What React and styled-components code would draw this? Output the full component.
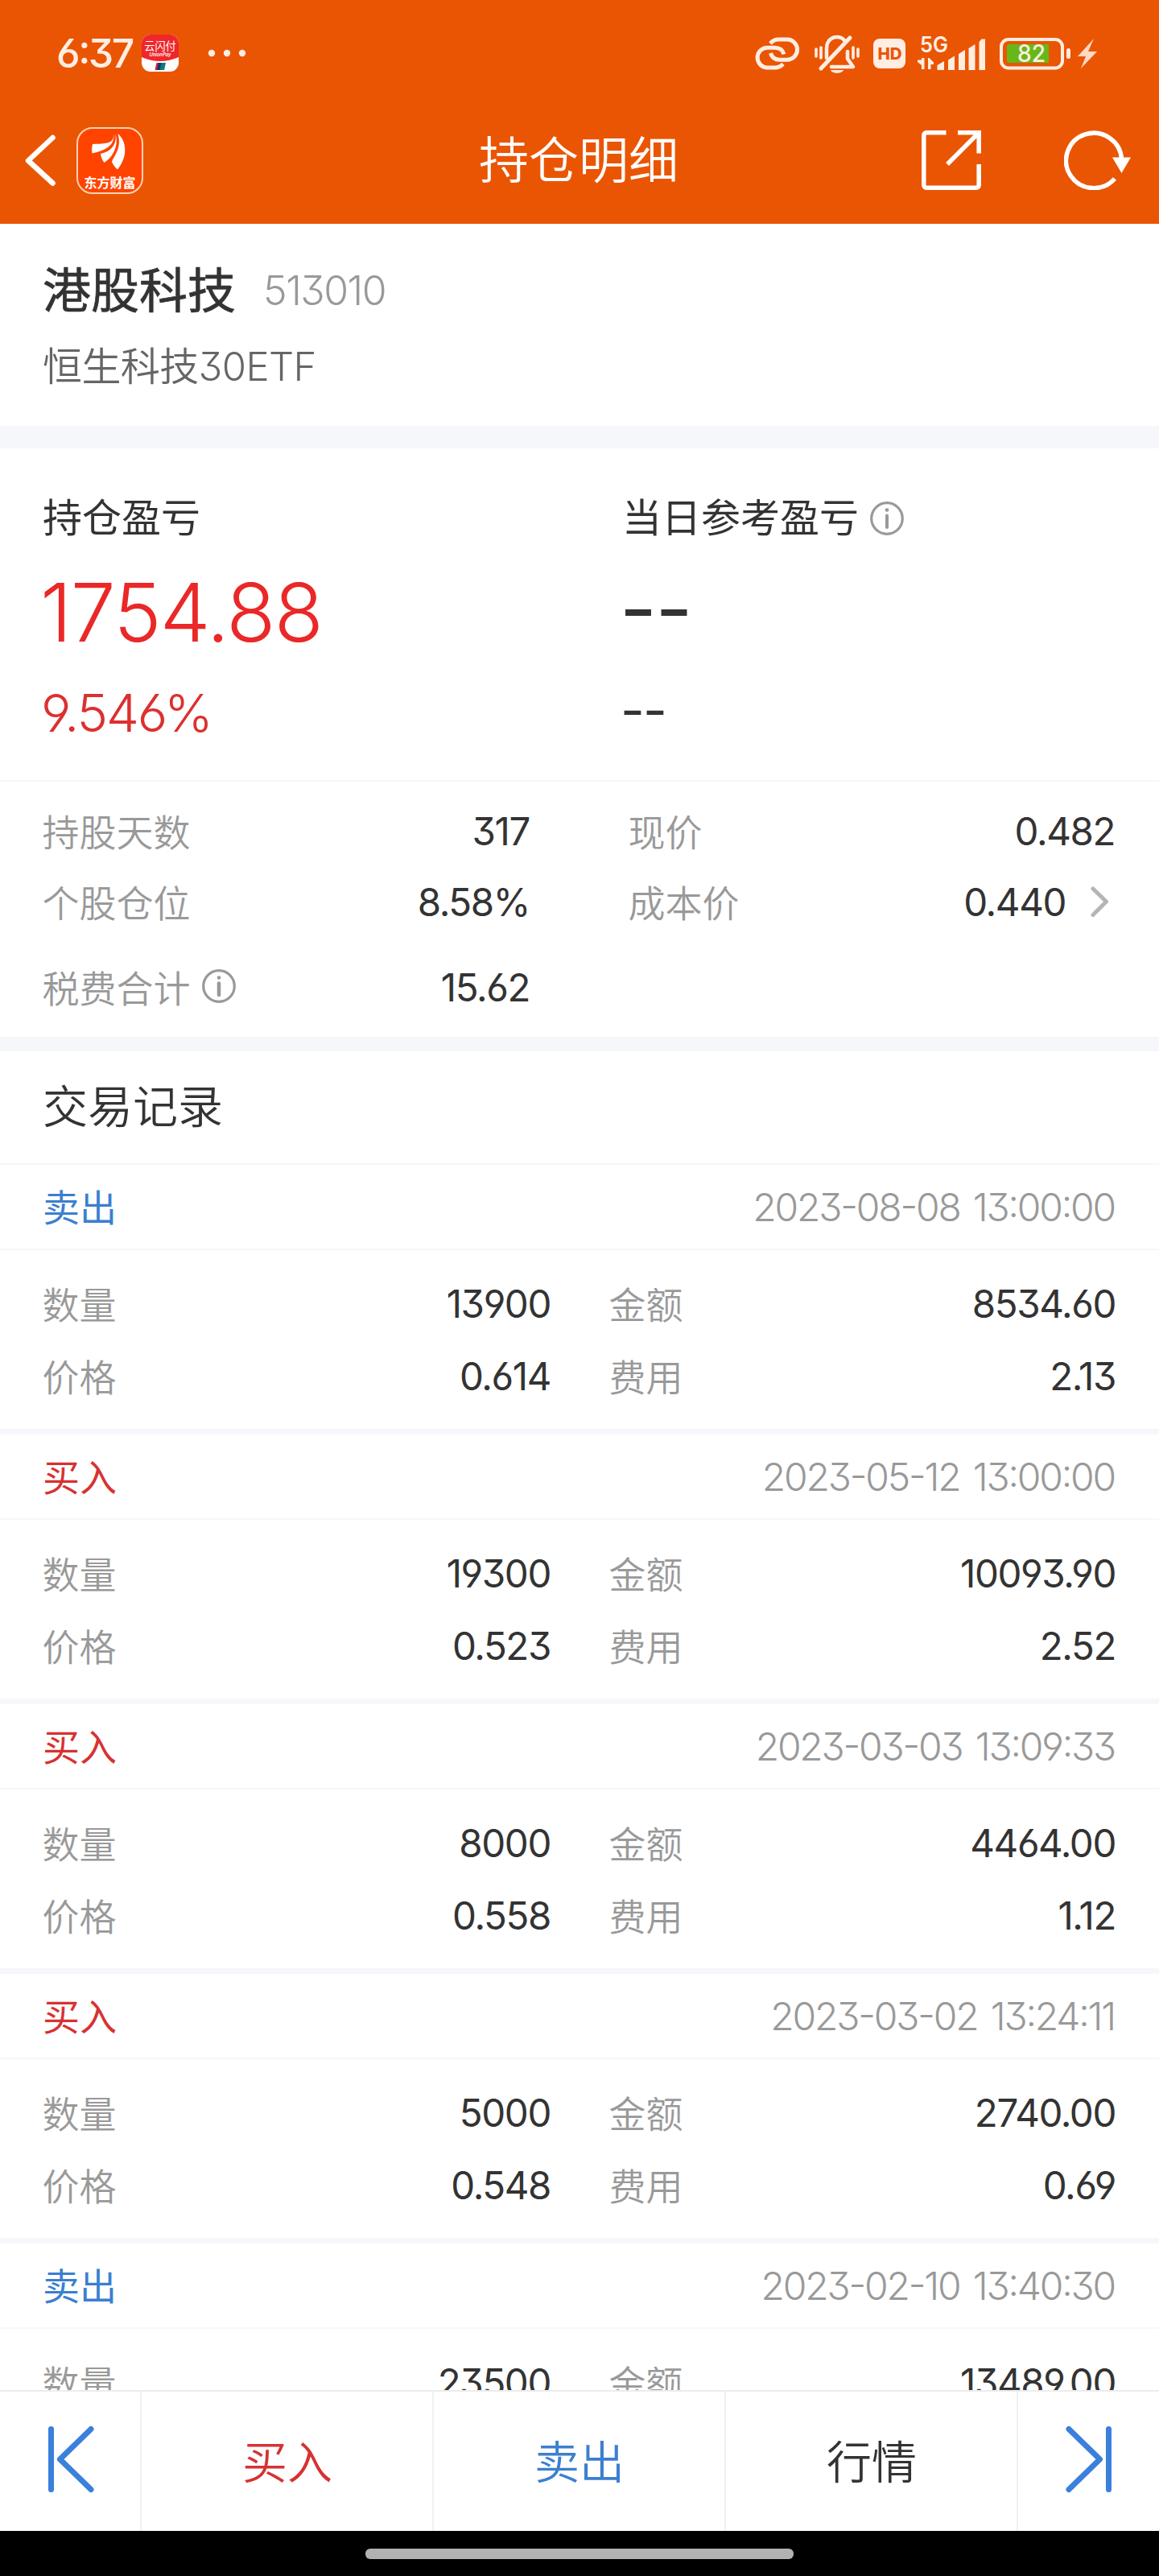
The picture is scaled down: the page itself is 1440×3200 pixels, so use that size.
import React from "react";
import styled, { createGlobalStyle } from "styled-components";

const GlobalStyle = createGlobalStyle`
	* {
		box-sizing: border-box;
	}

	body {
		margin: 0;
		background: #fff;
		color: #333;
		font-family: Inter, "Noto Sans CJK SC", sans-serif;
		font-feature-settings: "cv03", "cv04", "cv09", "case";
	}

	svg {
		display: block;
		flex: none;
	}
`;

const Screen = styled.div`
	width: 1440px;
	height: 3200px;
	display: flex;
	flex-direction: column;
	overflow: hidden;
`;

const Header = styled.header`
	height: 278px;
	flex: none;
	background: #ea5504;
`;

const StatusBar = styled.div`
	height: 132px;
	padding: 0 76px 0 70px;
	display: flex;
	align-items: center;
	color: #ffede2;
`;

const Clock = styled.span`
	width: 106px;
	font-size: 50px;
	font-weight: 500;
	letter-spacing: -2.5px;
	white-space: nowrap;
`;

const StatusIcons = styled.div`
	margin-left: auto;
	display: flex;
	align-items: center;
`;

const NavBar = styled.div`
	height: 134px;
	padding: 0 35px 0 30px;
	display: flex;
	align-items: center;
	justify-content: space-between;
`;

const NavSide = styled.div`
	width: 260px;
	display: flex;
	align-items: center;
	justify-content: ${(props) => (props.$end ? "flex-end" : "flex-start")};
	gap: ${(props) => props.$gap}px;
`;

const Title = styled.h1`
	margin: 0;
	padding: 2px 0 0 3px;
	color: #fff;
	font-size: 62px;
	font-weight: 350;
	line-height: 80px;
`;

const Content = styled.main`
	height: 2691px;
	flex: none;
	overflow: hidden;
`;

const Band = styled.div`
	height: ${(props) => props.$height}px;
	background: #f6f7fa;
`;

const StockInfo = styled.section`
	height: 251px;
	padding: 48px 53px 0;
`;

const StockName = styled.div`
	height: 70px;
	display: flex;
	align-items: center;
	gap: 34px;
	font-size: 60px;
	font-weight: 400;
	line-height: 70px;
	-webkit-text-stroke: 0.7px #333;
`;

const StockCode = styled.span`
	color: #999;
	font-size: 50px;
	font-weight: 300;
	letter-spacing: -1.5px;
	-webkit-text-stroke: 0;
`;

const FundName = styled.div`
	margin-top: 30px;
	color: #666;
	font-size: 49px;
	line-height: 60px;
	font-weight: 350;
	letter-spacing: -0.6px;
`;

const Summary = styled.section`
	height: 412px;
	padding-top: 57px;
	display: grid;
	grid-template-columns: 720px 720px;
`;

const SummaryItem = styled.div`
	padding-left: 53px;
`;

const SummaryLabel = styled.div`
	height: 60px;
	display: flex;
	align-items: center;
	gap: 14px;
	font-size: 49px;
	line-height: 60px;
`;

const Amount = styled.div`
	height: 120px;
	margin: 27px 0 0 -3px;
	color: ${(props) => (props.$rise ? "#ea2827" : "#333")};
	font-size: 100px;
	font-weight: ${(props) => (props.$rise ? 325 : 400)};
	line-height: 120px;
	letter-spacing: -1.6px;
`;

const Percent = styled.div`
	height: 80px;
	margin: 25px 0 0 -2px;
	color: ${(props) => (props.$rise ? "#dc3030" : "#333")};
	font-size: 65px;
	font-weight: ${(props) => (props.$rise ? 325 : 400)};
	line-height: 80px;
	letter-spacing: -2px;
`;

const Details = styled.section`
	height: 319px;
	padding-top: 17px;
	border-top: 2px solid #f7f7f8;
`;

const DetailRow = styled.div`
	height: ${(props) => props.$height}px;
	padding: 0 56px 0 54px;
	display: grid;
	grid-template-columns: 603px 602px;
	column-gap: 125px;
`;

const Field = styled.div`
	display: flex;
	align-items: center;
	justify-content: space-between;
`;

const FieldLabel = styled.span`
	margin-left: -1.5px;
	padding-bottom: 3px;
	display: flex;
	align-items: center;
	gap: 14px;
	color: #999;
	font-size: 46px;
	font-weight: 350;
`;

const FieldValue = styled.span`
	margin-right: -1px;
	display: flex;
	align-items: center;
	font-size: 47.5px;
	letter-spacing: -1.4px;
`;

const RecordsTitle = styled.h2`
	height: 141px;
	margin: 0;
	padding-left: 53px;
	border-bottom: 2px solid #f7f7f8;
	font-size: 56px;
	font-weight: 350;
	line-height: 139px;
`;

const RecordHead = styled.div`
	height: 106px;
	padding: 0 55px 0 53px;
	display: flex;
	align-items: center;
	justify-content: space-between;
	border-bottom: 2px solid #f7f7f8;
`;

const Side = styled.span`
	padding-bottom: 4px;
	color: ${(props) => (props.$buy ? "#d63232" : "#3b7fd0")};
	font-size: 46px;
`;

const Time = styled.span`
	color: #999;
	font-size: 48px;
	font-weight: 300;
	letter-spacing: -2.2px;
	word-spacing: 5px;
`;

const RecordBody = styled.div`
	height: 222px;
	padding: 21px 55px 0 54px;
	display: grid;
	grid-template-columns: 629px 627px;
	grid-auto-rows: 90px;
	column-gap: 75px;
`;

const TabBar = styled.nav`
	height: 175px;
	flex: none;
	display: grid;
	grid-template-columns: 176px 363px 363px 363px 175px;
	border-top: 2px solid #ececec;
`;

const Tab = styled.div`
	padding: 0 0 6px 1px;
	display: flex;
	align-items: center;
	justify-content: center;
	border-right: 2px solid #f0f0f0;
	color: ${(props) => props.$color};
	font-size: 56px;
	font-weight: 350;

	&:last-child {
		border-right: none;
	}
`;

const HomeBar = styled.footer`
	height: 56px;
	flex: none;
	display: flex;
	align-items: center;
	justify-content: center;
	background: #000;
`;

const HomePill = styled.div`
	width: 532px;
	height: 13px;
	margin-top: 1px;
	border-radius: 6px;
	background: #b2b2b2;
`;

const records = [
	{ side: "卖出", time: "2023-08-08 13:00:00", count: "13900", total: "8534.60", price: "0.614", fee: "2.13" },
	{ side: "买入", time: "2023-05-12 13:00:00", count: "19300", total: "10093.90", price: "0.523", fee: "2.52" },
	{ side: "买入", time: "2023-03-03 13:09:33", count: "8000", total: "4464.00", price: "0.558", fee: "1.12" },
	{ side: "买入", time: "2023-03-02 13:24:11", count: "5000", total: "2740.00", price: "0.548", fee: "0.69" },
	{ side: "卖出", time: "2023-02-10 13:40:30", count: "23500", total: "13489.00" },
];

function UnionPayIcon() {
	return (
		<svg width="46" height="46" viewBox="0 0 46 46">
			<rect width="46" height="46" rx="11" fill="#fff" />
			<path d="M0 28V11A11 11 0 0 1 11 0h24a11 11 0 0 1 11 11v17q-23 10-46 0z" fill="#f0262a" />
			<text x="23" y="18.500" fill="#fff" fontSize="13.2" textAnchor="middle">
				云闪付
			</text>
			<text x="23" y="27" fill="#fff" fontSize="5.8" fontStyle="italic" fontWeight="600" textAnchor="middle">
				UnionPay
			</text>
			<path d="M18.500 35h5l-2 9h-5z" fill="#c8203c" />
			<path d="M21 35h5l-2 9h-5z" fill="#12386f" />
			<path d="M24.500 35h5.500l-2 9h-5.500z" fill="#0c7a78" />
		</svg>
	);
}

const Dots = styled.svg`
	margin-left: 36px;
`;

function DotsIcon() {
	return (
		<Dots width="48" height="10" viewBox="0 0 48 10" fill="currentColor">
			<circle cx="5" cy="5" r="4.200" />
			<circle cx="24" cy="5" r="4.200" />
			<circle cx="43" cy="5" r="4.200" />
		</Dots>
	);
}

// link, muted bell, HD, 5G signal, battery and charging bolt in one strip
function StatusGlyphs() {
	return (
		<svg width="426" height="52" viewBox="938 40 426 52" fill="currentColor">
			<g fill="none" stroke="currentColor" strokeWidth="5">
				<path d="M957 54c3-3.500 6-5 10-5h11a12.600 12.600 0 0 1 0 25.200h-9c-6 0-10-2.500-11.500-8.200" />
				<path d="M973 79.500c-3 3-6 4.500-10 4.500h-9.500a12.400 12.400 0 0 1 0-24.800h9c6 0 10 2.500 11.500 8.200" />
			</g>
			<g fill="none" stroke="currentColor" strokeWidth="4.500" strokeLinecap="round">
				<path d="M1027 72V60c0-9 6-14 13-14 4 0 7 1.500 9 4" />
				<path d="M1053 64v9l7 10h-27" strokeLinejoin="round" />
				<path d="M1056 47l-36 38" strokeWidth="5" />
				<path d="M1014 61v9M1020 59v13M1060 59v13M1066 61v9" strokeWidth="3.600" />
			</g>
			<path d="M1032 87h16c-2 5-14 5-16 0z" />
			<rect x="1085" y="48" width="40" height="37" rx="8" />
			<text x="1105.500" y="74" fill="#ea5504" fontSize="20.500" fontWeight="800" textAnchor="middle">
				HD
			</text>
			<text x="1143" y="65" fontSize="27" fontWeight="600" textLength="35" lengthAdjust="spacingAndGlyphs">
				5G
			</text>
			<path d="M1148.500 72v14h-3.500v-5l-5-4v-2.500h5V72zM1153 86V72h1.500l5.500 5.500v2.500h-3.500v6z" />
			<path d="M1164.500 87v-6l8.500-5v11zM1178 87V74.500l8-5V87zM1191 87V67l8-5v25zM1203.500 87V60l8-5v32zM1216.500 87V52l3-3.500h4.500V87z" />
			<rect x="1244" y="49" width="76" height="35.500" rx="9" fill="none" stroke="currentColor" strokeWidth="4" />
			<path d="M1254 55h49v23h-49a3 3 0 0 1-3-3V58a3 3 0 0 1 3-3z" fill="#66b818" />
			<rect x="1325" y="60" width="5" height="13" rx="2.500" />
			<text x="1281.500" y="77" fontSize="30" fontWeight="500" textAnchor="middle" textLength="35" lengthAdjust="spacingAndGlyphs">
				82
			</text>
			<path d="M1359 48l-20 22h10l-6 15 20-21h-11z" fill="#ffd9c2" />
		</svg>
	);
}

function BackIcon() {
	return (
		<svg width="40" height="66" viewBox="0 0 40 66" fill="none" stroke="#fff" strokeWidth="6.500" strokeLinecap="round" strokeLinejoin="round">
			<path d="M35.500 5L5 33.500l30.500 28" />
		</svg>
	);
}

function BrandIcon() {
	return (
		<svg width="83" height="83" viewBox="0 0 83 83">
			<rect x="1" y="1" width="81" height="81" rx="19" fill="#ff4400" stroke="#ffd2b4" strokeWidth="2" />
			<g fill="#fff">
				<path d="M46.500 8c0 6-2 10-8 11.500-7 1.500-12 1-18.500 1.500-1 4-1 8-.5 11.500C26 31 33 29 39 25c5-3.500 8-9 7.500-17z" />
				<path d="M48.500 8c1 9-1 15-7 20-4 3-8 4-11.500 5 .5 4 2 8 4.500 11 4-3 7-5 10-10 4-6 7-15 4-26z" />
				<path d="M51.500 8c3 11 1 19-3 26-2 4-4 6-4.500 9 1.500 4 4 7 7 9.500 3.500-4 6-9 8-15 3-11 1-22-7.500-29.500z" />
			</g>
			<text x="41.500" y="75" fill="#fff" fontSize="16" fontWeight="700" textAnchor="middle">
				东方财富
			</text>
		</svg>
	);
}

function ShareIcon() {
	return (
		<svg width="74" height="74" viewBox="0 0 74 74" fill="none" stroke="#fff" strokeWidth="5.500">
			<path d="M30.500 2.800H6a3.200 3.200 0 0 0-3.200 3.200v62a3.200 3.200 0 0 0 3.200 3.200h62a3.200 3.200 0 0 0 3.200-3.200V42" />
			<path d="M45 2.800h26.200V28.500M70 4L32 42" />
		</svg>
	);
}

function RefreshIcon() {
	return (
		<svg width="83" height="74" viewBox="0 0 83 74" fill="none">
			<path d="M71.500 36A34.500 34.200 0 1 0 63 60" stroke="#fff" strokeWidth="5.500" />
			<path d="M60 33.500h23L71.500 53z" fill="#fff" />
		</svg>
	);
}

function InfoIcon({ bold }) {
	return (
		<svg width="42" height="42" viewBox="0 0 42 42" fill="none" stroke="#999">
			<circle cx="21" cy="21" r="19.300" strokeWidth="3.200" />
			<path d="M21 17.500v14.500" strokeWidth={bold ? 4.5 : 4} strokeLinecap="round" />
			<circle cx="21" cy="10.500" r="2.300" fill="#999" stroke="none" />
		</svg>
	);
}

const More = styled.svg`
	margin: 0 4px 0 31px;
`;

function MoreIcon() {
	return (
		<More width="26" height="38" viewBox="0 0 26 38" fill="none" stroke="#b5b5b5" strokeWidth="5" strokeLinecap="round" strokeLinejoin="round">
			<path d="M3 3l16.500 16L3 35.500" />
		</More>
	);
}

function SkipIcon({ next }) {
	return (
		<svg width="60" height="84" viewBox="0 0 60 84" fill="none" stroke="#3a80dc" strokeWidth="7" strokeLinecap="round" strokeLinejoin="round">
			{next ? <path d="M54.500 4.500v75M5 4.500l38.500 37.500L5 79.500" /> : <path d="M5.500 4.500v75M55 4.500L16.500 42 55 79.500" />}
		</svg>
	);
}

function DetailField({ label, value, info, more }) {
	return (
		<Field>
			<FieldLabel>
				{label}
				{info && <InfoIcon bold />}
			</FieldLabel>
			<FieldValue>
				{value}
				{more && <MoreIcon />}
			</FieldValue>
		</Field>
	);
}

function TradeRecord({ record }) {
	return (
		<>
			<RecordHead>
				<Side $buy={record.side === "买入"}>{record.side}</Side>
				<Time>{record.time}</Time>
			</RecordHead>
			<RecordBody>
				<DetailField label="数量" value={record.count} />
				<DetailField label="金额" value={record.total} />
				{record.price && <DetailField label="价格" value={record.price} />}
				{record.fee && <DetailField label="费用" value={record.fee} />}
			</RecordBody>
			<Band $height={7} />
		</>
	);
}

function App() {
	return (
		<Screen>
			<GlobalStyle />
			<Header>
				<StatusBar>
					<Clock>6:37</Clock>
					<UnionPayIcon />
					<DotsIcon />
					<StatusIcons>
						<StatusGlyphs />
					</StatusIcons>
				</StatusBar>
				<NavBar>
					<NavSide $gap={25}>
						<BackIcon />
						<BrandIcon />
					</NavSide>
					<Title>持仓明细</Title>
					<NavSide $end $gap={103}>
						<ShareIcon />
						<RefreshIcon />
					</NavSide>
				</NavBar>
			</Header>

			<Content>
				<StockInfo>
					<StockName>
						港股科技
						<StockCode>513010</StockCode>
					</StockName>
					<FundName>恒生科技30ETF</FundName>
				</StockInfo>
				<Band $height={28} />

				<Summary>
					<SummaryItem>
						<SummaryLabel>持仓盈亏</SummaryLabel>
						<Amount $rise>1754.88</Amount>
						<Percent $rise>9.546%</Percent>
					</SummaryItem>
					<SummaryItem>
						<SummaryLabel>
							当日参考盈亏
							<InfoIcon />
						</SummaryLabel>
						<Amount>--</Amount>
						<Percent>--</Percent>
					</SummaryItem>
				</Summary>

				<Details>
					<DetailRow $height={88}>
						<DetailField label="持股天数" value="317" />
						<DetailField label="现价" value="0.482" />
					</DetailRow>
					<DetailRow $height={88}>
						<DetailField label="个股仓位" value="8.58%" />
						<DetailField label="成本价" value="0.440" more />
					</DetailRow>
					<DetailRow $height={124}>
						<DetailField label="税费合计" value="15.62" info />
					</DetailRow>
				</Details>
				<Band $height={18} />

				<RecordsTitle>交易记录</RecordsTitle>
				{records.map((record) => (
					<TradeRecord key={record.time} record={record} />
				))}
			</Content>

			<TabBar>
				<Tab>
					<SkipIcon />
				</Tab>
				<Tab $color="#d63232">买入</Tab>
				<Tab $color="#3b7fd0">卖出</Tab>
				<Tab $color="#333">行情</Tab>
				<Tab>
					<SkipIcon next />
				</Tab>
			</TabBar>
			<HomeBar>
				<HomePill />
			</HomeBar>
		</Screen>
	);
}

export default App;
